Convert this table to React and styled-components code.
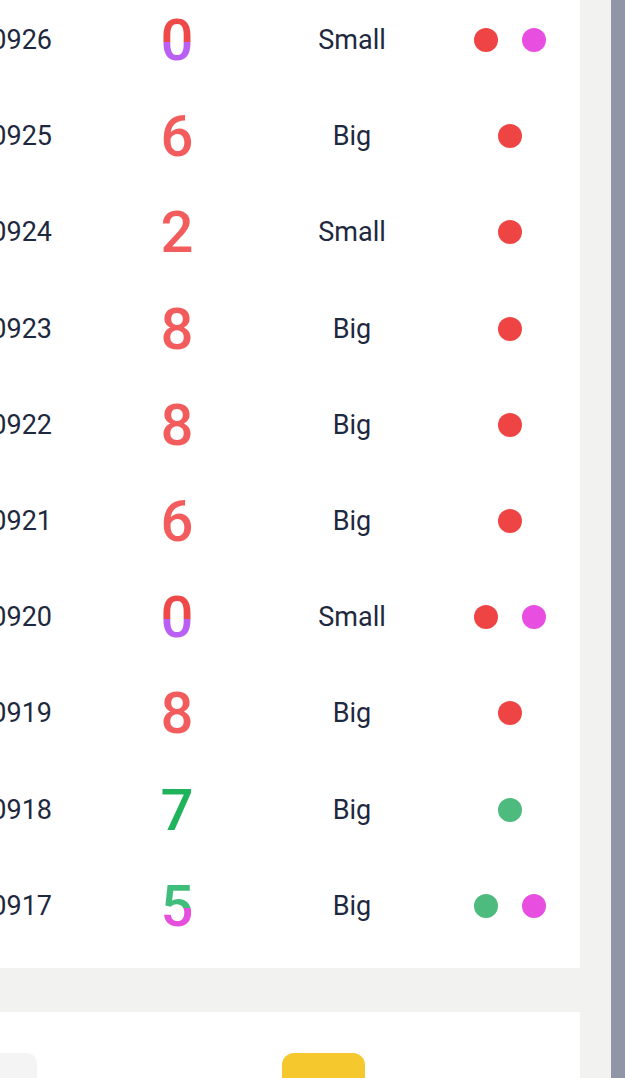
import React from "react";
import styled, { createGlobalStyle } from "styled-components";

const GlobalStyle = createGlobalStyle`
  html, body {
    margin: 0;
    padding: 0;
    background: #f2f2f0;
    overflow: hidden;
  }
  body {
    font-family: Roboto, "Noto Sans", "Liberation Sans", sans-serif;
  }
`;

const history = [
  { period: "20240508010926", num: 0, size: "Small", colors: ["red", "violet"] },
  { period: "20240508010925", num: 6, size: "Big", colors: ["red"] },
  { period: "20240508010924", num: 2, size: "Small", colors: ["red"] },
  { period: "20240508010923", num: 8, size: "Big", colors: ["red"] },
  { period: "20240508010922", num: 8, size: "Big", colors: ["red"] },
  { period: "20240508010921", num: 6, size: "Big", colors: ["red"] },
  { period: "20240508010920", num: 0, size: "Small", colors: ["red", "violet"] },
  { period: "20240508010919", num: 8, size: "Big", colors: ["red"] },
  { period: "20240508010918", num: 7, size: "Big", colors: ["green"] },
  { period: "20240508010917", num: 5, size: "Big", colors: ["green", "violet"] },
];

const digitColors = {
  red: "#f25c5c",
  green: "#1fb45b",
  violet: "#b95ff4",
};

const dotColors = {
  red: "#ef4444",
  green: "#4dbb7d",
  violet: "#e84fe0",
};

function digitBackground(colors) {
  if (colors.length === 1) return digitColors[colors[0]];
  const top = colors[0] === "red" ? "#ef4848" : "#3fbd7a";
  const bottom = colors[0] === "red" ? "#b95ff4" : "#e64fde";
  return `linear-gradient(to bottom, ${top} 0%, ${top} 54%, ${bottom} 54%, ${bottom} 100%)`;
}

export default function App() {
  return (
    <>
      <GlobalStyle />
      <Screen>
        <Main>
          <HistoryCard>
            {history.map((row) => (
              <Row key={row.period}>
                <Period>
                  <span>{row.period}</span>
                </Period>
                <NumberCell>
                  <Digit $bg={digitBackground(row.colors)}>{row.num}</Digit>
                </NumberCell>
                <SizeCell>{row.size}</SizeCell>
                <DotsCell>
                  {row.colors.map((c) => (
                    <Dot key={c} $color={dotColors[c]} />
                  ))}
                </DotsCell>
              </Row>
            ))}
          </HistoryCard>
          <Pager>
            <PrevButton />
            <NextButton />
          </Pager>
        </Main>
        <Gutter />
        <Scrim />
      </Screen>
    </>
  );
}

const Screen = styled.div`
  display: flex;
  width: 625px;
  height: 1078px;
  overflow: hidden;
`;

const Main = styled.div`
  width: 580px;
  display: flex;
  flex-direction: column;
  gap: 44px;
  flex-shrink: 0;
`;

const HistoryCard = styled.div`
  background: #ffffff;
  margin-top: -8px;
  margin-left: -148px;
  width: 728px;
  padding-bottom: 14px;
`;

const Row = styled.div`
  display: grid;
  grid-template-columns: 200px 250px 100px 178px;
  align-items: center;
  height: 96.2px;
`;

const Period = styled.div`
  display: flex;
  justify-content: flex-end;
  font-size: 27px;
  color: #1e2940;
  white-space: nowrap;

  span {
    flex-shrink: 0;
  }
`;

const NumberCell = styled.div`
  display: flex;
  justify-content: center;
`;

const Digit = styled.span`
  display: inline-block;
  font-size: 58px;
  font-weight: 500;
  line-height: 1;
  background: ${(p) => p.$bg};
  -webkit-background-clip: text;
  background-clip: text;
  color: transparent;
`;

const SizeCell = styled.div`
  text-align: center;
  font-size: 27px;
  color: #1e2940;
`;

const DotsCell = styled.div`
  display: flex;
  justify-content: center;
  gap: 24px;
  padding-left: 38px;
`;

const Dot = styled.span`
  width: 24px;
  height: 24px;
  border-radius: 50%;
  background: ${(p) => p.$color};
`;

const Pager = styled.div`
  flex: 1;
  background: #ffffff;
  margin-left: -148px;
  width: 728px;
  padding-top: 41px;
  display: flex;
  align-items: flex-start;
`;

const PrevButton = styled.div`
  width: 185px;
  height: 56px;
  border-radius: 10px;
  background: #f4f4f4;
`;

const NextButton = styled.div`
  margin-left: 245px;
  width: 83px;
  height: 56px;
  border-radius: 12px;
  background: #f5c92e;
`;

const Gutter = styled.div`
  width: 31px;
  flex-shrink: 0;
  background: #f2f2f0;
`;

const Scrim = styled.div`
  flex: 1;
  background: #9196a7;
`;
